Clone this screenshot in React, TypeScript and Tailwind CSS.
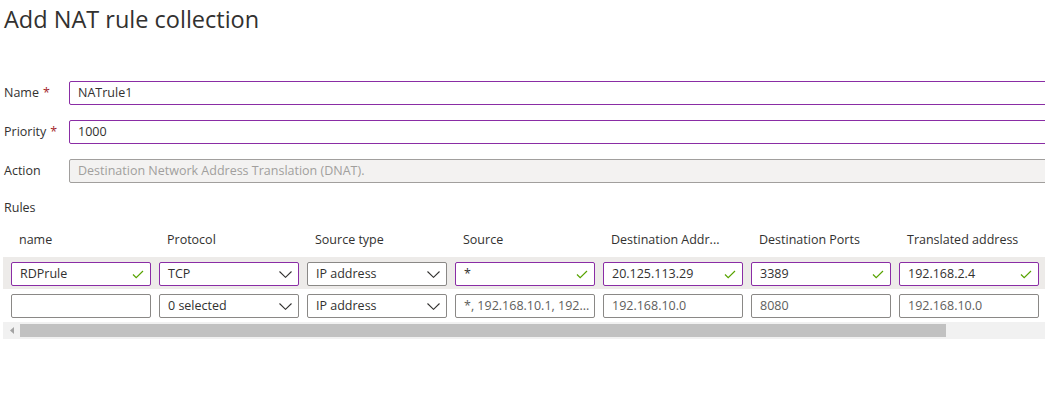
import React from 'react';

const font = { fontFamily: '"Open Sans", "Noto Sans", sans-serif' };

const Check = () => (
  <svg width="12" height="9" viewBox="0 0 12 9" className="shrink-0">
    <path d="M1 4.5 L4.2 7.7 L11 1" fill="none" stroke="#57a300" strokeWidth="1.2" />
  </svg>
);

const Chevron = () => (
  <svg width="13" height="7" viewBox="0 0 13 7" className="shrink-0">
    <path d="M0.5 0.5 L6.5 6.3 L12.5 0.5" fill="none" stroke="#323130" strokeWidth="1.1" />
  </svg>
);

type Cell = { text: string; kind: 'text' | 'select'; valid?: boolean; placeholder?: boolean };

const headers = [
  'name',
  'Protocol',
  'Source type',
  'Source',
  'Destination Addr...',
  'Destination Ports',
  'Translated address',
];

const rows: Cell[][] = [
  [
    { text: 'RDPrule', kind: 'text', valid: true },
    { text: 'TCP', kind: 'select', valid: true },
    { text: 'IP address', kind: 'select' },
    { text: '*', kind: 'text', valid: true },
    { text: '20.125.113.29', kind: 'text', valid: true },
    { text: '3389', kind: 'text', valid: true },
    { text: '192.168.2.4', kind: 'text', valid: true },
  ],
  [
    { text: '', kind: 'text' },
    { text: '0 selected', kind: 'select' },
    { text: 'IP address', kind: 'select' },
    { text: '*, 192.168.10.1, 192...', kind: 'text', placeholder: true },
    { text: '192.168.10.0', kind: 'text', placeholder: true },
    { text: '8080', kind: 'text', placeholder: true },
    { text: '192.168.10.0', kind: 'text', placeholder: true },
  ],
];

const RuleCell = ({ cell }: { cell: Cell }) => {
  const purple = cell.valid || (cell.kind === 'select' && cell.text === 'TCP');
  return (
    <div
      className={`flex h-6 w-[140px] shrink-0 items-center justify-between rounded-[2px] border bg-white pl-2 pr-[6px] text-[12.5px] ${
        purple ? 'border-[#8a2da5]' : 'border-[#8a8886]'
      }`}
    >
      <span className={`whitespace-nowrap ${cell.placeholder ? 'text-[#605e5c]' : 'text-[#323130]'}`}>
        {cell.text}
      </span>
      {cell.kind === 'select' ? <Chevron /> : cell.valid ? <Check /> : null}
    </div>
  );
};

const FormRow = ({ label, value, required, disabled }: { label: string; value: string; required?: boolean; disabled?: boolean }) => (
  <div className="flex items-center">
    <div className="w-[65px] shrink-0 text-[12.5px] text-[#323130]">
      {label}
      {required && <span className="ml-1 text-[#a4262c]">*</span>}
    </div>
    <div
      className={`flex h-6 w-[1000px] shrink-0 items-center rounded-[2px] border px-2 text-[12.5px] ${
        disabled ? 'border-[#a19f9d] bg-[#f3f2f1] text-[#a19f9d]' : 'border-[#8a2da5] bg-white text-[#323130]'
      }`}
    >
      {value}
    </div>
  </div>
);

export default function App() {
  return (
    <div className="h-[394px] w-[1045px] overflow-hidden bg-white" style={font}>
      <h1 className="pl-1 pt-[3px] text-[23.5px] leading-8 font-medium text-[#323130]">Add NAT rule collection</h1>

      <div className="mt-[46px] flex flex-col gap-[15px] pl-1">
        <FormRow label="Name" value="NATrule1" required />
        <FormRow label="Priority" value="1000" required />
        <FormRow label="Action" value="Destination Network Address Translation (DNAT)." disabled />
      </div>

      <div className="mt-[15px] pl-1 text-[12.5px] leading-5 text-[#323130]">Rules</div>

      <div className="mt-[10px] ml-[3px]">
        <div className="flex h-6 items-center gap-2 pl-2">
          {headers.map((h) => (
            <div key={h} className="w-[140px] shrink-0 pl-2 text-[12.5px] text-[#323130]">
              {h}
            </div>
          ))}
        </div>
        <div className="mt-[5px] flex gap-2 bg-[#edebe9] pb-[3px] pl-2 pt-[5px]">
          {rows[0].map((c, i) => (
            <RuleCell key={i} cell={c} />
          ))}
        </div>
        <div className="mt-[5px] flex gap-2 pl-2">
          {rows[1].map((c, i) => (
            <RuleCell key={i} cell={c} />
          ))}
        </div>
        <div className="mt-[4px] flex h-[17px] items-center bg-[#f1f1f1]">
          <div className="flex w-[17px] shrink-0 items-center justify-center">
            <svg width="4" height="7" viewBox="0 0 4 7">
              <path d="M4 0 L0 3.5 L4 7 Z" fill="#a3a3a3" />
            </svg>
          </div>
          <div className="h-[13px] w-[926px] bg-[#c1c1c1]" />
        </div>
      </div>
    </div>
  );
}
